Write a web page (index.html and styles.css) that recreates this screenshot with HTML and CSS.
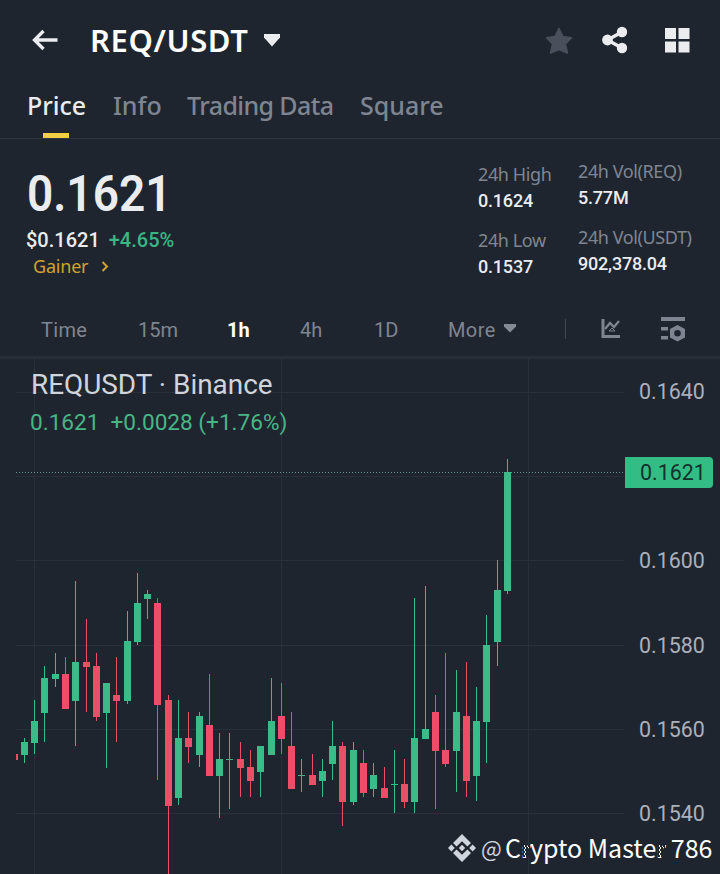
FILE: index.html
```html
<!DOCTYPE html>
<html lang="en">
<head>
<meta charset="utf-8">
<title>REQ/USDT</title>
<link rel="stylesheet" href="styles.css">
</head>
<body>
<div class="app">
  <header class="topbar">
    <svg class="back" width="28" height="22" viewBox="0 0 28 22"><path d="M12.5 2 3.5 11l9 9M3.500 11h23" fill="none" stroke="#eaecef" stroke-width="3.300"/></svg>
    <h1 class="pair">REQ/USDT</h1>
    <svg class="caret" width="16" height="13" viewBox="0 0 16 13"><path d="M0 0h16v3.500L8 12.500 0 3.500z" fill="#eaecef"/></svg>
    <svg class="star" width="28" height="28" viewBox="0 0 28 28"><path d="m14 1.500 4 8 8.500 1.300-6 6.300 2 9L14 22.500l-8.500 3.600 2-9-6-6.300L10 9.500z" fill="#4a505b" stroke="#4a505b" stroke-width="1.500" stroke-linejoin="round"/></svg>
    <svg class="share" width="28" height="28" viewBox="0 0 28 28"><path d="M21 6 6.500 14 21 22" fill="none" stroke="#eaecef" stroke-width="3.500"/><g fill="#eaecef"><circle cx="21" cy="6" r="5.200"/><circle cx="6.500" cy="14" r="5.400"/><circle cx="21" cy="22" r="5.200"/></g></svg>
    <svg class="tiles" width="25" height="25" viewBox="0 0 25 25"><path d="M0 0h11v11H0zM13.500 0h11v11h-11zM0 13.500h11v11H0zM13.500 13.500h11v11h-11z" fill="#eaecef"/></svg>
  </header>
  <nav class="tabs">
    <span class="tab t1 active">Price</span><span class="tab t2">Info</span><span class="tab t3">Trading Data</span><span class="tab t4">Square</span>
  </nav>
  <section class="summary">
    <div class="quote">
      <div class="last">0.1621</div>
      <div class="fiat"><span>$0.1621</span><span class="change">+4.65%</span></div>
      <div class="gainer"><span>Gainer</span><svg width="8" height="11" viewBox="0 0 8 11"><path d="m1.500 1 4.500 4.500L1.500 10" fill="none" stroke="#d0a331" stroke-width="2"/></svg></div>
    </div>
    <dl class="stats left">
      <dt class="high">24h High</dt><dd>0.1624</dd><dt class="low">24h Low</dt><dd>0.1537</dd>
    </dl>
    <dl class="stats right">
      <dt class="base">24h Vol(REQ)</dt><dd>5.77M</dd><dt class="usdt">24h Vol(USDT)</dt><dd>902,378.04</dd>
    </dl>
  </section>
  <nav class="intervals">
    <span class="i1">Time</span><span class="i2">15m</span><span class="i3 active">1h</span><span class="i4">4h</span><span class="i5">1D</span><span class="i6">More</span>
    <svg class="mini" width="12" height="9" viewBox="0 0 12 9"><path d="M0 0h12v2.500L6 8.500 0 2.500z" fill="#858b95"/></svg>
    <i class="sep"></i>
    <svg class="draw" width="20" height="20" viewBox="0 0 20 20"><g fill="none" stroke="#7f8590"><path d="M2 0v17.500h17" stroke-width="3"/><path d="m4 10 5-6 4 4 5-6" stroke-width="2.200"/><path d="m8 12 3-3 3 3z" stroke-width="1"/></g></svg>
    <svg class="settings" width="26" height="26" viewBox="0 0 26 26"><path d="M1 1h24v4H1zM1 11h7v3.500H1zM1 20h7v3.500H1z" fill="#7f8590"/><path fill-rule="evenodd" d="m17.500 9 7.500 4v8.500l-7.500 4-7.500-4V13zm0 5a3.300 3.300 0 1 0 0 6.600 3.300 3.300 0 0 0 0-6.600z" fill="#7f8590"/></svg>
  </nav>
  <main class="chart">
    <svg class="plot" width="720" height="518" viewBox="0 356 720 518">
      <path d="M16 392.500H624M16 476.500H624M16 560.500H624M16 645.500H624M16 729.500H624M16 813.500H624M34.500 358V874M281.500 358V874M528.500 358V874" stroke="#29303a"/>
      <path d="M16 472.500H625" stroke="#5f9b88" stroke-dasharray="1 2"/>
      <path class="up-wick" d="M24.500 738V763M34.500 700V754M44.500 666V742M55.500 653V687M75.500 581V746M106.500 683V768M127.500 611V704M137.500 573V645M147.500 590V619M178.500 700V805M199.500 712V767M219.500 733V818M229.500 733V809M260.500 746V797M271.500 678V755M301.500 759V792M322.500 759V797M332.500 721V780M353.500 742V805M373.500 763V797M394.500 750V813M414.500 598V813M425.500 586V739M456.500 670V792M476.500 687V801M486.500 615V763M497.500 560V666M507.500 459V594"/>
      <path class="down-wick" d="M65.500 657V709M86.500 619V712M96.500 653V721M116.500 657V742M157.500 598V780M168.500 695V874M188.500 712V763M209.500 674V776M240.500 742V797M250.500 750V797M281.500 683V754M291.500 712V789M312.500 754V785M342.500 742V826M363.500 750V797M384.500 767V798M404.500 759V808M435.500 695V809M445.500 653V767M466.500 662V797"/>
      <path class="up-body" d="M24.500 742V755M34.500 721V743M44.500 678V713M55.500 674V679M75.500 662V701M106.500 683V713M127.500 641V701M137.500 603V642M147.500 594V599M178.500 738V798M199.500 716V755M219.500 759V776M229.500 759V760M260.500 746V772M271.500 721V755M301.500 775V776M322.500 771V781M332.500 746V764M353.500 750V802M373.500 775V789M394.500 784V785M414.500 738V802M425.500 729V739M456.500 712V751M476.500 721V776M486.500 645V722M497.500 590V642M507.500 472V591"/>
      <path class="down-body" d="M65.500 674V709M86.500 662V667M96.500 666V717M116.500 695V701M157.500 603V705M168.500 700V806M188.500 738V747M209.500 725V776M240.500 759V768M250.500 767V781M281.500 716V739M291.500 746V789M312.500 775V785M342.500 746V802M363.500 763V793M384.500 788V798M404.500 784V802M435.500 712V751M445.500 750V764M466.500 716V781"/>
      <path d="M16 754h2v6h-2z" fill="#e84f67"/>
      <path d="M625 457h84a4 4 0 0 1 4 4v23a4 4 0 0 1-4 4h-84z" fill="#34bc85"/>
      <g class="axis"><text x="639" y="399">0.1640</text><text x="639" y="568">0.1600</text><text x="639" y="653">0.1580</text><text x="639" y="737">0.1560</text><text x="639" y="821">0.1540</text><text class="current" x="640" y="480">0.1621</text></g>
    </svg>
    <div class="legend">
      <div class="symbol">REQUSDT · Binance</div>
      <div class="delta"><span>0.1621</span><span>+0.0028 (+1.76%)</span></div>
    </div>
    <div class="credit">
      <svg width="28" height="28" viewBox="0 0 28 28"><path d="m14 0 9 9-3.600 3.500L14 7.200l-5.400 5.300L5 9zM5 19l3.600-3.500L14 20.800l5.400-5.300L23 19l-9 9zM14 10.800l3.200 3.200-3.200 3.200-3.200-3.200zM3.400 10.600 6.800 14l-3.400 3.400L0 14zM24.600 10.600 28 14l-3.400 3.400-3.400-3.400z" fill="#d0d4dc"/></svg>
      <span class="at">@</span><span class="author">C<b>r</b>ypto Maste<b>r</b> 786</span>
    </div>
  </main>
</div>
</body>
</html>
```

FILE: styles.css
```css
* { box-sizing: border-box; }
body { margin: 0; background: #1f252f; font-family: Roboto, "Noto Sans", sans-serif; color: #eaecef; }
.app { width: 720px; height: 874px; overflow: hidden; }
svg { display: block; flex: none; }
span, dt, dd, h1 { white-space: nowrap; }

.topbar { height: 80px; display: flex; align-items: center; padding-left: 31px; }
.pair { margin: 0 0 0 31px; width: 173px; font: 600 31px/40px "Noto Sans", sans-serif; letter-spacing: 0.6px; color: #fff; }
.caret { margin-left: 1px; }
.star { margin-left: 265px; margin-top: 1px; }
.share { margin-left: 28px; }
.tiles { margin-left: 36px; }

.tabs { height: 59px; display: flex; padding: 8px 0 0 27px; border-bottom: 1px solid #2e343e; font: 500 25px/34px "Noto Sans", sans-serif; color: #7f8590; }
.tab { height: 50px; }
.t1 { width: 86px; }
.t2 { width: 74px; }
.t3 { width: 173px; letter-spacing: -0.6px; }
.tabs .active { color: #eaecef; display: flex; flex-direction: column; }
.t1::after { content: ""; width: 26px; height: 5px; margin: 11px 0 0 16px; background: #f0cf45; }

.summary { height: 165px; display: flex; padding-left: 27px; }
.quote { width: 451px; padding-top: 26px; }
.last { font-size: 50px; line-height: 58px; font-weight: 600; transform: scaleX(0.92); transform-origin: left; }
.fiat { display: flex; gap: 9px; font-size: 20px; line-height: 26px; margin: 4px 0 0 -1px; font-weight: 500; }
.change { color: #3bb583; }
.gainer { display: flex; align-items: center; gap: 13px; padding-left: 6px; font: 18px/26px "Noto Sans", sans-serif; letter-spacing: -0.2px; color: #d0a331; }
.stats { margin: 0; font-size: 18px; line-height: 26px; }
.stats.left { width: 100px; padding-top: 22px; }
.stats.right { padding-top: 19px; }
dt { font-family: "Noto Sans", sans-serif; letter-spacing: -0.4px; color: #7f8590; }
dd { margin: 1px 0 13px; font-weight: 500; letter-spacing: -0.2px; }

.intervals { height: 52px; display: flex; align-items: center; padding-left: 41px; font-size: 20px; line-height: 26px; color: #7f8590; }
.i1 { width: 97px; letter-spacing: 0.3px; }
.i2 { width: 89px; }
.i3 { width: 73px; }
.i4 { width: 74px; }
.i5 { width: 74px; }
.i6 { width: 56px; letter-spacing: 0.4px; }
.intervals .active { color: #fff; font-weight: 700; }
.mini { margin-top: -4px; }
.sep { width: 1px; height: 20px; margin: -3px 0 0 49px; background: #414853; }
.draw { margin: -2px 0 0 35px; }
.settings { margin: -2px 0 0 39px; }

.chart { position: relative; height: 518px; border-top: 3px solid #282d37; }
.plot { margin-top: -3px; }
.up-wick, .down-wick { stroke-width: 1; }
.up-body, .down-body { stroke-width: 7; }
.up-wick, .up-body { stroke: #3bbb88; }
.down-wick, .down-body { stroke: #ec4e67; }
.axis { font-size: 21.4px; fill: #abb0ba; }
.axis .current { fill: #12312b; }
.legend { position: absolute; left: 31px; top: 8px; }
.symbol { font-size: 27.9px; line-height: 36px; color: #d0d4dc; }
.delta { display: flex; gap: 11px; font-size: 22.6px; line-height: 30px; margin: 5px 0 0 -1px; color: #48b586; }
.credit { position: absolute; left: 448px; top: 474px; height: 30px; display: flex; align-items: center; font: 25px/30px "Noto Sans CJK SC", sans-serif; color: #fff; }
.at { margin: -3px 0 0 5px; width: 24px; font-size: 22px; color: #d0d4dc; }
.author { margin-top: -2px; }
.author b { position: relative; display: inline-block; width: 9px; font-weight: 700; font-size: 22px; }
.author b::after { content: ""; position: absolute; left: 0; top: 10px; width: 9px; height: 14px; background: repeating-conic-gradient(#1f252f 0 25%, transparent 0 50%) 1px 0 / 3px 4px; }
```
